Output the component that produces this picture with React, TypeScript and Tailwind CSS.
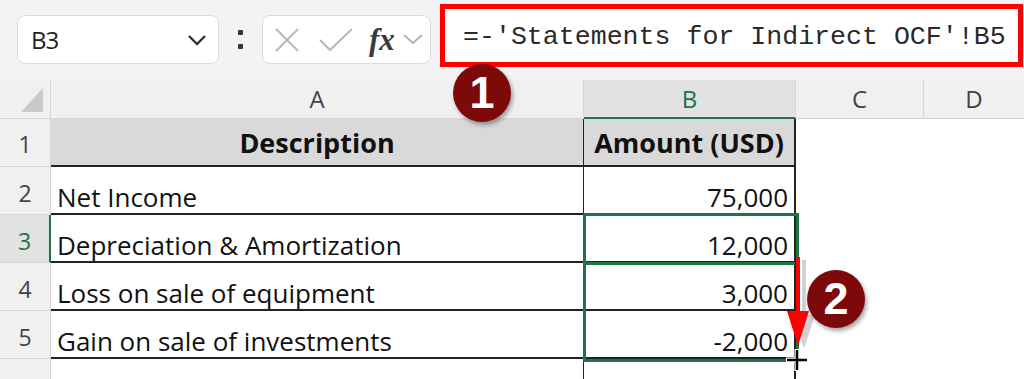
import React from "react";

type Row = { n: number; desc: string; amount: string };

const rows: Row[] = [
  { n: 2, desc: "Net Income", amount: "75,000" },
  { n: 3, desc: "Depreciation & Amortization", amount: "12,000" },
  { n: 4, desc: "Loss on sale of equipment", amount: "3,000" },
  { n: 5, desc: "Gain on sale of investments", amount: "-2,000" },
];

const Badge = ({ label, className }: { label: string; className: string }) => (
  <div
    className={`absolute w-[58px] h-[58px] rounded-full bg-[#7d0a0a] text-white flex items-center justify-center text-[45px] font-bold shadow-[2px_3px_4px_rgba(0,0,0,0.35)] ${className}`}
    style={{ fontFamily: '"Liberation Sans", Arial, sans-serif' }}
  >
    {label}
  </div>
);

export default function App() {
  return (
    <div
      className="relative w-[1024px] h-[379px] overflow-hidden bg-white"
      style={{ fontFamily: '"Open Sans", "Noto Sans", sans-serif' }}
    >
      {/* formula bar */}
      <div className="h-[80px] bg-[#f3f3f3] flex items-start pl-[17px]">
        <div className="mt-[15px] w-[202px] h-[49px] bg-white rounded-[8px] border border-[#dcdcdc] flex items-center justify-between pl-[13px] pr-[11px]">
          <span className="text-[24px] text-[#222] tracking-[-1px]">B3</span>
          <svg width="20" height="12" viewBox="0 0 20 12">
            <path d="M2 2 L10 10 L18 2" fill="none" stroke="#333" strokeWidth="2.4" />
          </svg>
        </div>
        <div className="mt-[15px] w-[43px] h-[49px] flex flex-col items-center justify-center gap-[9px]">
          <span className="w-[5px] h-[5px] rounded-[1px] bg-[#333]" />
          <span className="w-[5px] h-[5px] rounded-[1px] bg-[#333]" />
        </div>
        <div className="mt-[15px] w-[169px] h-[49px] bg-white rounded-[8px] border border-[#dcdcdc] flex items-center pl-[11px]">
          <svg width="26" height="26" viewBox="0 0 26 26">
            <path d="M2 2 L24 24 M24 2 L2 24" stroke="#b8b8b8" strokeWidth="2" />
          </svg>
          <svg className="ml-[19px]" width="34" height="24" viewBox="0 0 34 24">
            <path d="M1 12 L11 22 L33 1" fill="none" stroke="#b8b8b8" strokeWidth="2" />
          </svg>
          <span
            className="ml-[16px] text-[31px] italic font-bold text-[#3a3a3a] leading-none"
            style={{ fontFamily: '"Liberation Serif", "DejaVu Serif", serif' }}
          >
            fx
          </span>
          <svg className="ml-[8px]" width="20" height="11" viewBox="0 0 20 11">
            <path d="M1 1 L10 9 L19 1" fill="none" stroke="#b0b0b0" strokeWidth="1.8" />
          </svg>
        </div>
        <div className="ml-[9px] mt-[4px] w-[583px] h-[63px] border-[5px] border-[#ff0000] bg-white flex items-center pl-[18px] pt-[4px]">
          <span
            className="text-[26.6px] text-[#2a2a2a] whitespace-nowrap"
            style={{ fontFamily: '"Liberation Mono", "DejaVu Sans Mono", monospace' }}
          >
            =-'Statements for Indirect OCF'!B5
          </span>
        </div>
      </div>

      {/* grid */}
      <div className="grid grid-cols-[51px_533px_212px_128px_100px] grid-rows-[39px_48px_48px_48px_48px_48px_20px]">
        {/* column headers */}
        <div className="bg-[#f0f0f0] border-b border-r border-[#d6d6d6] flex items-end justify-end pb-[6px] pr-[7px]">
          <svg width="22" height="24" viewBox="0 0 22 24">
            <path d="M22 0 L22 24 L0 24 Z" fill="#c9c9c9" />
          </svg>
        </div>
        <div className="bg-[#f0f0f0] border-b border-r border-[#d6d6d6] flex items-center justify-center text-[24px] text-[#444]">
          A
        </div>
        <div className="bg-[#e2e2e2] border-b-2 border-b-[#217346] border-r border-r-[#d6d6d6] flex items-center justify-center text-[24px] text-[#217346]">
          B
        </div>
        <div className="bg-[#f0f0f0] border-b border-r border-[#d6d6d6] flex items-center justify-center text-[24px] text-[#444]">
          C
        </div>
        <div className="bg-[#f0f0f0] border-b border-[#d6d6d6] flex items-center justify-center text-[24px] text-[#444]">
          D
        </div>

        {/* row 1: table header */}
        <div className="bg-[#f0f0f0] border-b border-r border-[#d6d6d6] flex items-center justify-center pt-[3px] text-[23px] text-[#444]">
          1
        </div>
        <div className="bg-[#d9d9d9] border-b-2 border-r border-[#222] flex items-center justify-center pt-[3px] text-[27px] font-bold text-[#111]">
          Description
        </div>
        <div className="bg-[#d9d9d9] border-b-2 border-r-2 border-[#222] flex items-center justify-center pt-[3px] text-[27px] font-bold text-[#111] whitespace-nowrap">
          Amount (USD)
        </div>
        <div />
        <div />

        {rows.map((r) => (
          <React.Fragment key={r.n}>
            <div
              className={`border-b border-r border-[#d6d6d6] flex items-center justify-center pt-[6px] text-[23px] ${
                r.n === 3
                  ? "bg-[#e2e2e2] text-[#217346] border-r-2 border-r-[#217346]"
                  : "bg-[#f0f0f0] text-[#444]"
              }`}
            >
              {r.n}
            </div>
            <div className="border-b-2 border-r border-[#222] flex items-end pl-[6px] pb-[4px] text-[26px] leading-[24px] text-[#111] whitespace-nowrap">
              {r.desc}
            </div>
            <div className="border-b-2 border-r-2 border-[#222] flex items-end justify-end pr-[6px] pb-[4px] text-[26px] leading-[24px] text-[#111]">
              {r.amount}
            </div>
            <div />
            <div />
          </React.Fragment>
        ))}

        {/* row 6 */}
        <div className="bg-[#f0f0f0] border-r border-[#d6d6d6]" />
        <div className="border-r border-[#222]" />
        <div className="border-r-2 border-[#222]" />
        <div />
        <div />
      </div>

      {/* selection B3:B5 */}
      <div className="absolute left-[583px] top-[213px] w-[216px] h-[149px] border-[3px] border-[#217346]" />
      <div className="absolute left-[583px] top-[262px] w-[212px] h-[3px] bg-[#217346]" />

      {/* fill arrow */}
      <svg className="absolute left-[780px] top-[255px]" width="40" height="96" viewBox="0 0 40 96">
        <path d="M22 3 L22 58 L31 58 L20 92 L9 58 L18 58 L18 3 Z" fill="#000" opacity="0.18" transform="translate(4 2)" />
        <path d="M20 2 L20 56 L29 56 L18 91 L7 56 L16 56 L16 2 Z" fill="#ff0000" />
      </svg>

      {/* fill cursor */}
      <svg className="absolute left-[785px] top-[348px]" width="24" height="24" viewBox="0 0 24 24">
        <path d="M12 1 L12 23 M1 12 L23 12" stroke="#fff" strokeWidth="5" />
        <path d="M12 2 L12 22 M2 12 L22 12" stroke="#000" strokeWidth="2.5" />
      </svg>

      <Badge label="1" className="left-[453px] top-[64px]" />
      <Badge label="2" className="left-[807px] top-[270px]" />
    </div>
  );
}
